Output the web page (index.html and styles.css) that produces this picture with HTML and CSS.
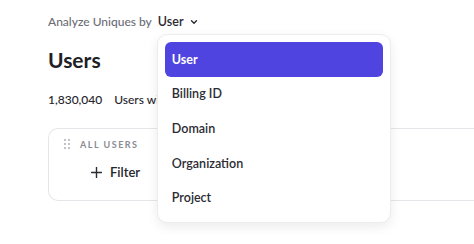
FILE: index.html
```html
<!DOCTYPE html>
<html lang="en">
<head>
    <meta charset="UTF-8">
    <meta name="viewport" content="width=device-width, initial-scale=1.0">
    <title>Users</title>
    <link rel="stylesheet" href="styles.css">
</head>
<body>
    <div class="page">
        <div class="analyze-bar">
            <span class="analyze-label">Analyze Uniques by</span>
            <span class="analyze-select">
                User
                <svg class="chevron" width="8" height="6" viewBox="0 0 8 6">
                    <path d="M1.5 1.8 L4 4.2 L6.5 1.8" fill="none" stroke="#2a2a33" stroke-width="1.4" stroke-linecap="round" stroke-linejoin="round"/>
                </svg>
                <div class="dropdown">
                    <div class="dropdown-item selected">User</div>
                    <div class="dropdown-item">Billing ID</div>
                    <div class="dropdown-item">Domain</div>
                    <div class="dropdown-item">Organization</div>
                    <div class="dropdown-item">Project</div>
                </div>
            </span>
        </div>

        <h1 class="title">Users</h1>

        <div class="stats">
            <span class="count">1,830,040</span>
            <span class="count-label">Users with profiles</span>
        </div>

        <div class="card">
            <div class="card-header">
                <svg class="drag-handle" width="6" height="10" viewBox="0 0 6 10">
                    <circle cx="1" cy="1" r="0.9" fill="#a5a5ad"/>
                    <circle cx="5" cy="1" r="0.9" fill="#a5a5ad"/>
                    <circle cx="1" cy="5" r="0.9" fill="#a5a5ad"/>
                    <circle cx="5" cy="5" r="0.9" fill="#a5a5ad"/>
                    <circle cx="1" cy="9" r="0.9" fill="#a5a5ad"/>
                    <circle cx="5" cy="9" r="0.9" fill="#a5a5ad"/>
                </svg>
                <span class="card-title">ALL USERS</span>
            </div>
            <div class="filter-button">
                <svg class="plus" width="11" height="11" viewBox="0 0 11 11">
                    <path d="M5.5 0.5 V10.5 M0.5 5.5 H10.5" stroke="#2a2a33" stroke-width="1.4" stroke-linecap="round"/>
                </svg>
                Filter
            </div>
        </div>
    </div>
</body>
</html>
```

FILE: styles.css
```css
body {
    font-family: 'Lato', 'Noto Sans', sans-serif;
    background-color: #ffffff;
    color: #25252d;
    margin: 0;
}

.page {
    min-height: 244px;
    box-sizing: border-box;
    padding: 13px 0 0 48px;
}

.analyze-bar {
    display: flex;
    align-items: center;
    height: 17px;
    font-size: 12px;
}

.analyze-label {
    color: #6d6d76;
    font-weight: 500;
}

.analyze-select {
    position: relative;
    display: flex;
    align-items: center;
    margin-left: 6px;
    font-size: 12.5px;
    color: #2a2a33;
    font-weight: 600;
}

.chevron {
    margin-left: 6px;
}

.dropdown {
    position: absolute;
    top: 20px;
    left: -1px;
    width: 218px;
    padding: 7px;
    background-color: #ffffff;
    border: 1px solid #ececef;
    border-radius: 10px;
    box-shadow: 0 4px 12px rgba(0, 0, 0, 0.08);
    z-index: 10;
}

.dropdown-item {
    height: 34.6px;
    display: flex;
    align-items: center;
    padding-left: 7px;
    border-radius: 6px;
    font-size: 12.5px;
    font-weight: 600;
    color: #2b2b33;
}

.dropdown-item.selected {
    background-color: #4f44e0;
    color: #ffffff;
    font-weight: 700;
}

.title {
    margin: 17px 0 0;
    font-size: 21px;
    font-weight: 700;
    line-height: 26px;
    color: #1f1f27;
}

.stats {
    margin-top: 19px;
    display: flex;
    gap: 12px;
    font-size: 12px;
    font-weight: 500;
    line-height: 16px;
    color: #25252d;
}

.card {
    margin-top: 20px;
    height: 73px;
    border: 1px solid #e6e6ea;
    border-right: none;
    border-radius: 10px 0 0 10px;
    box-sizing: border-box;
    padding: 9px 0 0 15px;
}

.card-header {
    display: flex;
    align-items: center;
    height: 12px;
}

.card-title {
    margin-left: 10px;
    font-size: 9px;
    font-weight: 700;
    letter-spacing: 1.5px;
    color: #8b8b93;
}

.filter-button {
    display: flex;
    align-items: center;
    margin: 14px 0 0 27px;
    font-size: 13px;
    font-weight: 600;
    color: #25252d;
}

.plus {
    margin-right: 8px;
}
```
